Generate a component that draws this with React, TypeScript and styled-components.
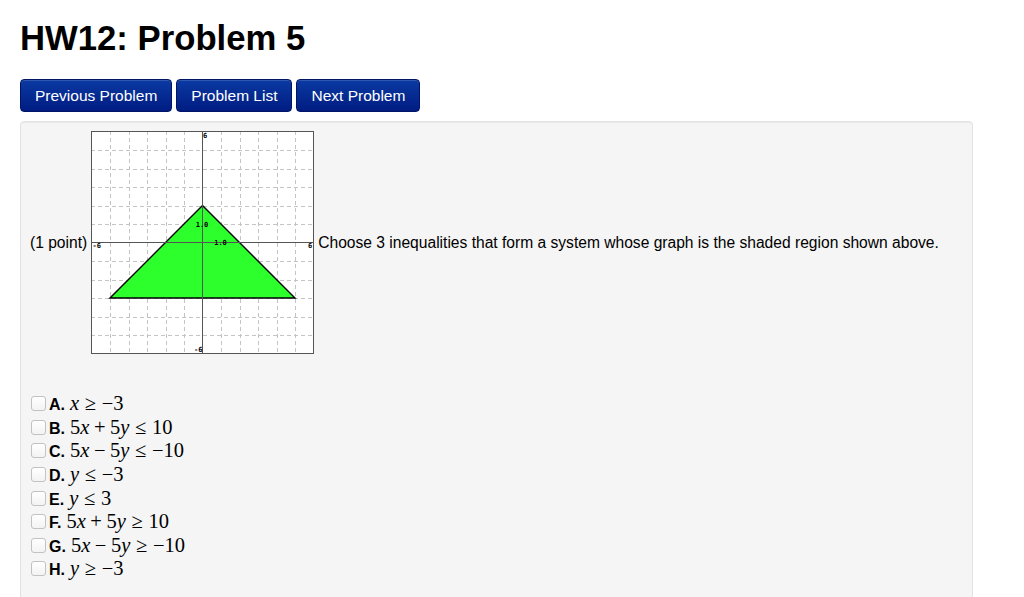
import React from "react";
import styled, { createGlobalStyle } from "styled-components";

const Global = createGlobalStyle`
  html, body { margin: 0; padding: 0; background: #fff; }
  body { font-family: "Liberation Sans", Arial, Helvetica, sans-serif; color: #000; }
`;

const Page = styled.div`
  padding: 0 51px 0 20px;
`;

const Title = styled.h1`
  margin: 0;
  padding-top: 18px;
  font-size: 34.7px;
  line-height: 40px;
  font-weight: bold;
`;

const NavBar = styled.div`
  display: flex;
  gap: 4px;
  margin-top: 21px;
`;

const NavButton = styled.button`
  height: 33px;
  padding: 0 14px;
  border: 1px solid #001566;
  border-radius: 4px;
  background: linear-gradient(#0a3aa2, #001c82);
  color: #fff;
  font-family: "Liberation Sans", Arial, sans-serif;
  font-size: 15.5px;
  box-shadow: inset 0 1px 0 rgba(255, 255, 255, 0.15);
  cursor: pointer;
`;

const Well = styled.div`
  margin-top: 9px;
  min-height: 520px;
  background: #f5f5f5;
  border: 1px solid #e3e3e3;
  border-radius: 4px;
  padding: 9px 9px;
  box-shadow: inset 0 1px 1px rgba(0, 0, 0, 0.05);
`;

const ProblemLine = styled.div`
  display: flex;
  align-items: center;
  gap: 4px;
  font-size: 15.6px;
`;

const Graph = styled.svg`
  display: block;
  flex: none;
  background: #fff;
`;

const Options = styled.div`
  margin-top: 38px;
  display: flex;
  flex-direction: column;
`;

const OptionRow = styled.label`
  display: flex;
  align-items: center;
  height: 23.6px;
`;

const Box = styled.input`
  appearance: none;
  -webkit-appearance: none;
  width: 15px;
  height: 15px;
  margin: 0 3px 0 1px;
  border: 1px solid #c2c2c2;
  border-radius: 3px;
  background: linear-gradient(#ffffff, #f3f3f3);
  flex: none;
`;

const LabelText = styled.span`
  white-space: nowrap;
`;

const Letter = styled.b`
  font-family: "Liberation Sans", Arial, sans-serif;
  font-size: 16px;
  margin-right: 5px;
`;

const MathText = styled.span`
  font-family: "Liberation Serif", "Times New Roman", serif;
  font-size: 20.5px;
`;

const V = styled.i`
  font-style: italic;
`;

const Bin = styled.span`
  margin: 0 0.222em;
`;

const Rel = styled.span`
  margin: 0 0.278em;
`;

const U = 18.5;
const O = 111.5;
const px = (x: number) => O + x * U;
const py = (y: number) => O - y * U;
const crisp = (v: number) => Math.round(v) + 0.5;

function GraphPicture() {
  const ticks = [-5, -4, -3, -2, -1, 1, 2, 3, 4, 5];
  const lbl = { fontFamily: "DejaVu Sans Mono, monospace", fontSize: 7, fontWeight: 700, fill: "#000" } as const;
  return (
    <Graph width={223} height={223} viewBox="0 0 223 223">
      {ticks.map((t) => (
        <line
          key={"v" + t}
          x1={crisp(px(t))}
          x2={crisp(px(t))}
          y1={0}
          y2={223}
          stroke="#c4c4c4"
          strokeDasharray="4 3"
          shapeRendering="crispEdges"
        />
      ))}
      {ticks.map((t) => (
        <line
          key={"h" + t}
          y1={crisp(py(t))}
          y2={crisp(py(t))}
          x1={0}
          x2={223}
          stroke="#c4c4c4"
          strokeDasharray="4 3"
          shapeRendering="crispEdges"
        />
      ))}
      <polygon
        points={`${px(-5)},${py(-3)} ${px(0)},${py(2)} ${px(5)},${py(-3)}`}
        fill="#2cff2c"
        stroke="#000"
        strokeWidth={1.4}
      />
      <line x1={O} x2={O} y1={0} y2={223} stroke="#555" shapeRendering="crispEdges" />
      <line y1={O} y2={O} x1={0} x2={223} stroke="#555" shapeRendering="crispEdges" />
      <rect x={0.5} y={0.5} width={222} height={222} fill="none" stroke="#555" shapeRendering="crispEdges" />
      <text x={112} y={7} style={lbl}>6</text>
      <text x={1.5} y={117} style={lbl}>-6</text>
      <text x={217} y={117} style={lbl}>6</text>
      <text x={103} y={221} style={lbl}>-6</text>
      <text x={111} y={95.5} textAnchor="middle" style={lbl}>1.0</text>
      <text x={129.5} y={114} textAnchor="middle" style={lbl}>1.0</text>
    </Graph>
  );
}

type Opt = { letter: string; math: React.ReactNode };

const options: Opt[] = [
  { letter: "A.", math: (<><V>x</V><Rel>≥</Rel>−3</>) },
  { letter: "B.", math: (<>5<V>x</V><Bin>+</Bin>5<V>y</V><Rel>≤</Rel>10</>) },
  { letter: "C.", math: (<>5<V>x</V><Bin>−</Bin>5<V>y</V><Rel>≤</Rel>−10</>) },
  { letter: "D.", math: (<><V>y</V><Rel>≤</Rel>−3</>) },
  { letter: "E.", math: (<><V>y</V><Rel>≤</Rel>3</>) },
  { letter: "F.", math: (<>5<V>x</V><Bin>+</Bin>5<V>y</V><Rel>≥</Rel>10</>) },
  { letter: "G.", math: (<>5<V>x</V><Bin>−</Bin>5<V>y</V><Rel>≥</Rel>−10</>) },
  { letter: "H.", math: (<><V>y</V><Rel>≥</Rel>−3</>) },
];

export default function App() {
  return (
    <>
      <Global />
      <Page>
        <Title>HW12: Problem 5</Title>
        <NavBar>
          <NavButton>Previous Problem</NavButton>
          <NavButton>Problem List</NavButton>
          <NavButton>Next Problem</NavButton>
        </NavBar>
        <Well>
          <ProblemLine>
            <span>(1 point)</span>
            <GraphPicture />
            <span>Choose 3 inequalities that form a system whose graph is the shaded region shown above.</span>
          </ProblemLine>
          <Options>
            {options.map((o) => (
              <OptionRow key={o.letter}>
                <Box type="checkbox" />
                <LabelText>
                  <Letter>{o.letter}</Letter>
                  <MathText>{o.math}</MathText>
                </LabelText>
              </OptionRow>
            ))}
          </Options>
        </Well>
      </Page>
    </>
  );
}
